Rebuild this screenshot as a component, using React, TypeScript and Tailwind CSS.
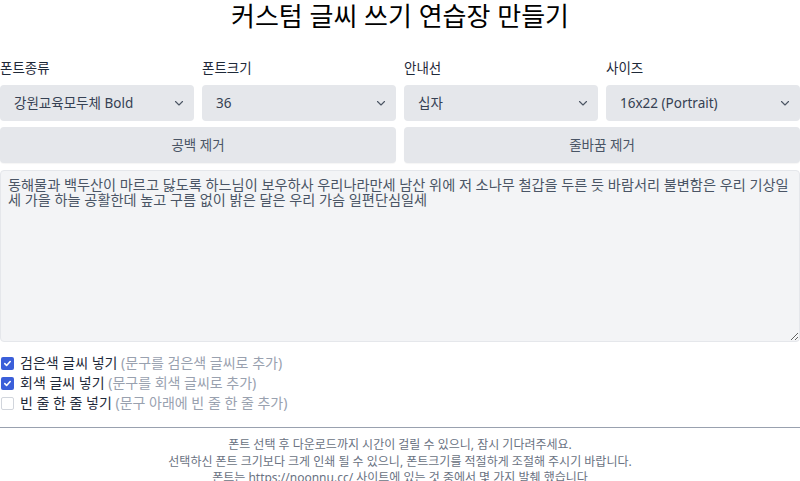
import React from "react";

const Chevron = () => (
  <svg
    className="pointer-events-none absolute right-[9px] top-1/2 -translate-y-1/2"
    width="12"
    height="12"
    viewBox="0 0 24 24"
    fill="none"
    stroke="#4b5563"
    strokeWidth="2.2"
    strokeLinecap="round"
    strokeLinejoin="round"
  >
    <path d="M5 9l7 7 7-7" />
  </svg>
);

const fields = [
  { label: "폰트종류", value: "강원교육모두체 Bold" },
  { label: "폰트크기", value: "36" },
  { label: "안내선", value: "십자" },
  { label: "사이즈", value: "16x22 (Portrait)" },
];

const checks = [
  { on: true, main: "검은색 글씨 넣기", sub: "(문구를 검은색 글씨로 추가)" },
  { on: true, main: "회색 글씨 넣기", sub: "(문구를 회색 글씨로 추가)" },
  { on: false, main: "빈 줄 한 줄 넣기", sub: "(문구 아래에 빈 줄 한 줄 추가)" },
];

export default function App() {
  return (
    <div className="w-[800px] bg-white font-['Noto_Sans','Noto_Sans_CJK_KR',sans-serif] text-gray-800">
      <h1 className="text-center text-[26px] leading-[32px] text-black">
        커스텀 글씨 쓰기 연습장 만들기
      </h1>

      <div className="mt-[28px] grid grid-cols-4 gap-x-2">
        {fields.map((f) => (
          <div key={f.label} className="flex flex-col">
            <label className="mb-[9px] text-[13.5px] leading-[16px] text-gray-800">{f.label}</label>
            <div className="relative">
              <select
                className="h-9 w-full appearance-none rounded-[4px] bg-gray-200 pl-3.5 pr-8 text-[13.5px] text-gray-700 outline-none"
                defaultValue={f.value}
              >
                <option>{f.value}</option>
              </select>
              <Chevron />
            </div>
          </div>
        ))}
      </div>

      <div className="mt-[6px] grid grid-cols-2 gap-x-2">
        <button className="h-9 rounded-[4px] bg-gray-200 text-[13.5px] text-gray-600 shadow-[0_1px_1px_rgba(0,0,0,0.04)]">
          공백 제거
        </button>
        <button className="h-9 rounded-[4px] bg-gray-200 text-[13.5px] text-gray-600 shadow-[0_1px_1px_rgba(0,0,0,0.04)]">
          줄바꿈 제거
        </button>
      </div>

      <textarea
        className="mt-[7px] block h-[172px] w-full resize-y break-all rounded-[4px] border border-gray-200 bg-gray-100 px-[7px] py-[6px] text-[14.2px] leading-[15px] text-gray-600 outline-none"
        defaultValue="동해물과 백두산이 마르고 닳도록 하느님이 보우하사 우리나라만세 남산 위에 저 소나무 철갑을 두른 듯 바람서리 불변함은 우리 기상일세 가을 하늘 공활한데 높고 구름 없이 밝은 달은 우리 가슴 일편단심일세"
      />

      <div className="mt-[14px] flex flex-col gap-y-[6px]">
        {checks.map((c) => (
          <label key={c.main} className="flex items-center gap-[6px] pl-[1px] text-[14px] leading-[14px]">
            <span className="relative flex h-[13px] w-[13px] items-center justify-center">
              <input
                type="checkbox"
                defaultChecked={c.on}
                className={
                  c.on
                    ? "h-[13px] w-[13px] appearance-none rounded-[2px] bg-[#3b5fd9]"
                    : "h-[13px] w-[13px] appearance-none rounded-[2px] border border-gray-300 bg-white"
                }
              />
              {c.on && (
                <svg
                  className="pointer-events-none absolute"
                  width="9"
                  height="9"
                  viewBox="0 0 10 10"
                  fill="none"
                  stroke="white"
                  strokeWidth="1.8"
                  strokeLinecap="round"
                  strokeLinejoin="round"
                >
                  <path d="M2 5.2l2 2 4-4.4" />
                </svg>
              )}
            </span>
            <span className="text-gray-800">
              {c.main} <span className="text-gray-400">{c.sub}</span>
            </span>
          </label>
        ))}
      </div>

      <hr className="mt-[17px] border-t border-gray-400" />

      <div className="mt-[9px] text-center text-[12px] leading-[16.5px] text-gray-500">
        <p>폰트 선택 후 다운로드까지 시간이 걸릴 수 있으니, 잠시 기다려주세요.</p>
        <p>선택하신 폰트 크기보다 크게 인쇄 될 수 있으니, 폰트크기를 적절하게 조절해 주시기 바랍니다.</p>
        <p>폰트는 https://noonnu.cc/ 사이트에 있는 것 중에서 몇 가지 발췌 했습니다</p>
      </div>
    </div>
  );
}
